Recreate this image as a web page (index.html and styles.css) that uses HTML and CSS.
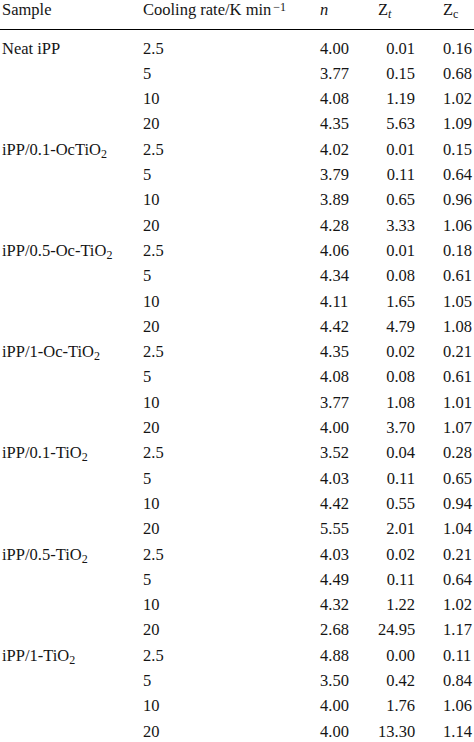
FILE: index.html
```html
<!DOCTYPE html>
<html>
<head>
<meta charset="utf-8">
<link rel="stylesheet" href="styles.css">
</head>
<body>
<div class="table">
  <div class="head">
    <div class="c1">Sample</div>
    <div class="c2">Cooling rate/K min<span class="sup">−1</span></div>
    <div class="c3"><i>n</i></div>
    <div class="c4 hl">Z<span class="sub"><i>t</i></span></div>
    <div class="c5">Z<span class="sub">c</span></div>
  </div>
  <div class="body">
    <div class="c1">Neat iPP</div><div class="c2">2.5</div><div class="c3">4.00</div><div class="c4">0.01</div><div class="c5">0.16</div>
    <div class="c1"></div><div class="c2">5</div><div class="c3">3.77</div><div class="c4">0.15</div><div class="c5">0.68</div>
    <div class="c1"></div><div class="c2">10</div><div class="c3">4.08</div><div class="c4">1.19</div><div class="c5">1.02</div>
    <div class="c1"></div><div class="c2">20</div><div class="c3">4.35</div><div class="c4">5.63</div><div class="c5">1.09</div>

    <div class="c1">iPP/0.1-OcTiO<span class="sub">2</span></div><div class="c2">2.5</div><div class="c3">4.02</div><div class="c4">0.01</div><div class="c5">0.15</div>
    <div class="c1"></div><div class="c2">5</div><div class="c3">3.79</div><div class="c4">0.11</div><div class="c5">0.64</div>
    <div class="c1"></div><div class="c2">10</div><div class="c3">3.89</div><div class="c4">0.65</div><div class="c5">0.96</div>
    <div class="c1"></div><div class="c2">20</div><div class="c3">4.28</div><div class="c4">3.33</div><div class="c5">1.06</div>

    <div class="c1">iPP/0.5-Oc-TiO<span class="sub">2</span></div><div class="c2">2.5</div><div class="c3">4.06</div><div class="c4">0.01</div><div class="c5">0.18</div>
    <div class="c1"></div><div class="c2">5</div><div class="c3">4.34</div><div class="c4">0.08</div><div class="c5">0.61</div>
    <div class="c1"></div><div class="c2">10</div><div class="c3">4.11</div><div class="c4">1.65</div><div class="c5">1.05</div>
    <div class="c1"></div><div class="c2">20</div><div class="c3">4.42</div><div class="c4">4.79</div><div class="c5">1.08</div>

    <div class="c1">iPP/1-Oc-TiO<span class="sub">2</span></div><div class="c2">2.5</div><div class="c3">4.35</div><div class="c4">0.02</div><div class="c5">0.21</div>
    <div class="c1"></div><div class="c2">5</div><div class="c3">4.08</div><div class="c4">0.08</div><div class="c5">0.61</div>
    <div class="c1"></div><div class="c2">10</div><div class="c3">3.77</div><div class="c4">1.08</div><div class="c5">1.01</div>
    <div class="c1"></div><div class="c2">20</div><div class="c3">4.00</div><div class="c4">3.70</div><div class="c5">1.07</div>

    <div class="c1">iPP/0.1-TiO<span class="sub">2</span></div><div class="c2">2.5</div><div class="c3">3.52</div><div class="c4">0.04</div><div class="c5">0.28</div>
    <div class="c1"></div><div class="c2">5</div><div class="c3">4.03</div><div class="c4">0.11</div><div class="c5">0.65</div>
    <div class="c1"></div><div class="c2">10</div><div class="c3">4.42</div><div class="c4">0.55</div><div class="c5">0.94</div>
    <div class="c1"></div><div class="c2">20</div><div class="c3">5.55</div><div class="c4">2.01</div><div class="c5">1.04</div>

    <div class="c1">iPP/0.5-TiO<span class="sub">2</span></div><div class="c2">2.5</div><div class="c3">4.03</div><div class="c4">0.02</div><div class="c5">0.21</div>
    <div class="c1"></div><div class="c2">5</div><div class="c3">4.49</div><div class="c4">0.11</div><div class="c5">0.64</div>
    <div class="c1"></div><div class="c2">10</div><div class="c3">4.32</div><div class="c4">1.22</div><div class="c5">1.02</div>
    <div class="c1"></div><div class="c2">20</div><div class="c3">2.68</div><div class="c4">24.95</div><div class="c5">1.17</div>

    <div class="c1">iPP/1-TiO<span class="sub">2</span></div><div class="c2">2.5</div><div class="c3">4.88</div><div class="c4">0.00</div><div class="c5">0.11</div>
    <div class="c1"></div><div class="c2">5</div><div class="c3">3.50</div><div class="c4">0.42</div><div class="c5">0.84</div>
    <div class="c1"></div><div class="c2">10</div><div class="c3">4.00</div><div class="c4">1.76</div><div class="c5">1.06</div>
    <div class="c1"></div><div class="c2">20</div><div class="c3">4.00</div><div class="c4">13.30</div><div class="c5">1.14</div>
  </div>
</div>
</body>
</html>
```
FILE: styles.css
```css
html, body {
  margin: 0;
  padding: 0;
  background: #ffffff;
}
.table {
  font-family: "Liberation Serif", "Times New Roman", serif;
  font-size: 16.5px;
  color: #151515;
  width: 474px;
  overflow: hidden;
}
.head,
.body {
  display: grid;
  grid-template-columns: 141px 177px 58px 37px 61px;
  padding-left: 2px;
}
.head {
  line-height: 20px;
  height: 29px;
  border-bottom: 1px solid #000;
  box-sizing: content-box;
}
.body {
  padding-top: 5.6px;
  line-height: 25.3px;
  grid-auto-rows: 25.3px;
}
.c1, .c2, .c3 {
  white-space: nowrap;
}
.c4 {
  white-space: nowrap;
}
.body .c4 {
  text-align: right;
}
.head .hl {
  text-align: left;
}
.c5 {
  padding-left: 28px;
  white-space: nowrap;
}
.sup {
  font-size: 12px;
  vertical-align: 4.5px;
  line-height: 0;
  margin-left: 2px;
}
.sub {
  font-size: 12px;
  vertical-align: -3px;
  line-height: 0;
}
```
